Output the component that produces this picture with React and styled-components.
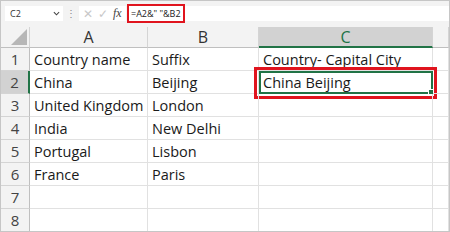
import React from "react";
import styled, { createGlobalStyle } from "styled-components";

const rows = [
  ["Country name", "Suffix", "Country- Capital City"],
  ["China", "Beijing", "China Beijing"],
  ["United Kingdom", "London", ""],
  ["India", "New Delhi", ""],
  ["Portugal", "Lisbon", ""],
  ["France", "Paris", ""],
  ["", "", ""],
  ["", "", ""],
];

function App() {
  return (
    <>
      <GlobalStyle />
      <Window>
        <Toolbar>
          <NameBox>
            <span>C2</span>
            <Chevron viewBox="0 0 8 5">
              <path d="M1 1 L4 4 L7 1" />
            </Chevron>
          </NameBox>
          <Dots>⋮</Dots>
          <ActionBox>
            <Action>✕</Action>
            <Action>✓</Action>
            <Fx>fx</Fx>
          </ActionBox>
          <FormulaInput>
            <Highlight>=A2&amp;" "&amp;B2</Highlight>
          </FormulaInput>
        </Toolbar>
        <Grid>
          <Corner>
            <svg width="16" height="16" viewBox="0 0 16 16">
              <polygon points="16,0 16,16 0,16" fill="#b7b7b7" />
            </svg>
          </Corner>
          <ColHead>A</ColHead>
          <ColHead>B</ColHead>
          <ColHead $active>C</ColHead>
          <ColHead />
          {rows.map((r, i) => (
            <React.Fragment key={i}>
              <RowHead $active={i === 1}>{i + 1}</RowHead>
              <Cell>{r[0]}</Cell>
              <Cell>{r[1]}</Cell>
              <Cell $selected={i === 1}>
                {r[2]}
                {i === 1 && (
                  <>
                    <FillHandle />
                    <RedFrame />
                  </>
                )}
              </Cell>
              <Cell />
            </React.Fragment>
          ))}
        </Grid>
      </Window>
    </>
  );
}

export default App;

const GlobalStyle = createGlobalStyle`
  body {
    margin: 0;
    background: #fff;
  }
`;

const Window = styled.div`
  width: 450px;
  height: 232px;
  overflow: hidden;
  box-sizing: border-box;
  border: 1px solid #c6c6c6;
  background: #f3f3f3;
  font-family: "Open Sans", "Noto Sans", sans-serif;
`;

// FORMULA BAR
const Toolbar = styled.div`
  display: flex;
  align-items: center;
  height: 24px;
  padding: 0 0 1px 4px;
`;
const NameBox = styled.div`
  width: 58px;
  height: 15px;
  background: #fff;
  display: flex;
  align-items: center;
  justify-content: space-between;
  padding: 0 3px 0 5px;
  box-sizing: border-box;
  font-size: 9px;
  color: #333;
`;
const Chevron = styled.svg`
  width: 7px;
  height: 5px;
  fill: none;
  stroke: #444;
  stroke-width: 1.2;
`;
const Dots = styled.div`
  width: 16px;
  text-align: center;
  font-size: 10px;
  color: #888;
`;
const ActionBox = styled.div`
  width: 47px;
  height: 15px;
  background: #fff;
  display: flex;
  align-items: center;
  justify-content: space-around;
  padding: 0 2px;
  box-sizing: border-box;
`;
const Action = styled.span`
  font-size: 12px;
  color: #c8c8c8;
`;
const Fx = styled.span`
  font-family: "Liberation Serif", serif;
  font-style: italic;
  font-size: 12px;
  color: #444;
`;
const FormulaInput = styled.div`
  flex: 1;
  height: 15px;
  margin-left: 1px;
  background: #fff;
  display: flex;
  align-items: center;
`;
const Highlight = styled.div`
  border: 2.5px solid #e0141e;
  padding: 2px 2px;
  font-size: 9px;
  color: #222;
  line-height: 11px;
  background: #fff;
`;

// SHEET GRID
const Grid = styled.div`
  display: grid;
  grid-template-columns: 29px 118px 111px 174px 1fr;
  grid-template-rows: 21px repeat(8, 23px);
  background: #fff;
  margin-top: 1px;
`;
const Corner = styled.div`
  display: flex;
  align-items: flex-end;
  justify-content: flex-end;
  padding: 0 2px 2px 0;
  background: #f3f3f3;
  border-right: 1px solid #d4d4d4;
  border-bottom: 1px solid #bfbfbf;
`;
const ColHead = styled.div`
  display: flex;
  align-items: center;
  justify-content: center;
  font-size: 16px;
  color: ${(p) => (p.$active ? "#217346" : "#333")};
  background: ${(p) => (p.$active ? "#d2d2d2" : "#f3f3f3")};
  border-right: 1px solid #d4d4d4;
  border-bottom: ${(p) => (p.$active ? "2px solid #217346" : "1px solid #bfbfbf")};
`;
const RowHead = styled.div`
  display: flex;
  align-items: center;
  justify-content: center;
  font-size: 15px;
  color: #444;
  background: ${(p) => (p.$active ? "#d2d2d2" : "#f3f3f3")};
  border-bottom: 1px solid #d4d4d4;
  border-right: ${(p) => (p.$active ? "2px solid #217346" : "1px solid #bfbfbf")};
`;
const Cell = styled.div`
  position: relative;
  display: flex;
  align-items: center;
  padding: 1px 0 0 4px;
  font-size: 14.5px;
  color: #1a1a1a;
  white-space: nowrap;
  border-right: 1px solid #e1e1e1;
  border-bottom: 1px solid #e1e1e1;
  box-sizing: border-box;
  ${(p) =>
    p.$selected &&
    `
    outline: 2px solid #217346;
    outline-offset: -2px;
  `}
`;
const FillHandle = styled.span`
  position: absolute;
  right: -2px;
  bottom: -2px;
  width: 4px;
  height: 4px;
  background: #217346;
  border: 1px solid #fff;
`;
const RedFrame = styled.span`
  position: absolute;
  left: -5px;
  right: -5px;
  top: -4px;
  bottom: -6px;
  border: 3px solid #e0141e;
  pointer-events: none;
`;
